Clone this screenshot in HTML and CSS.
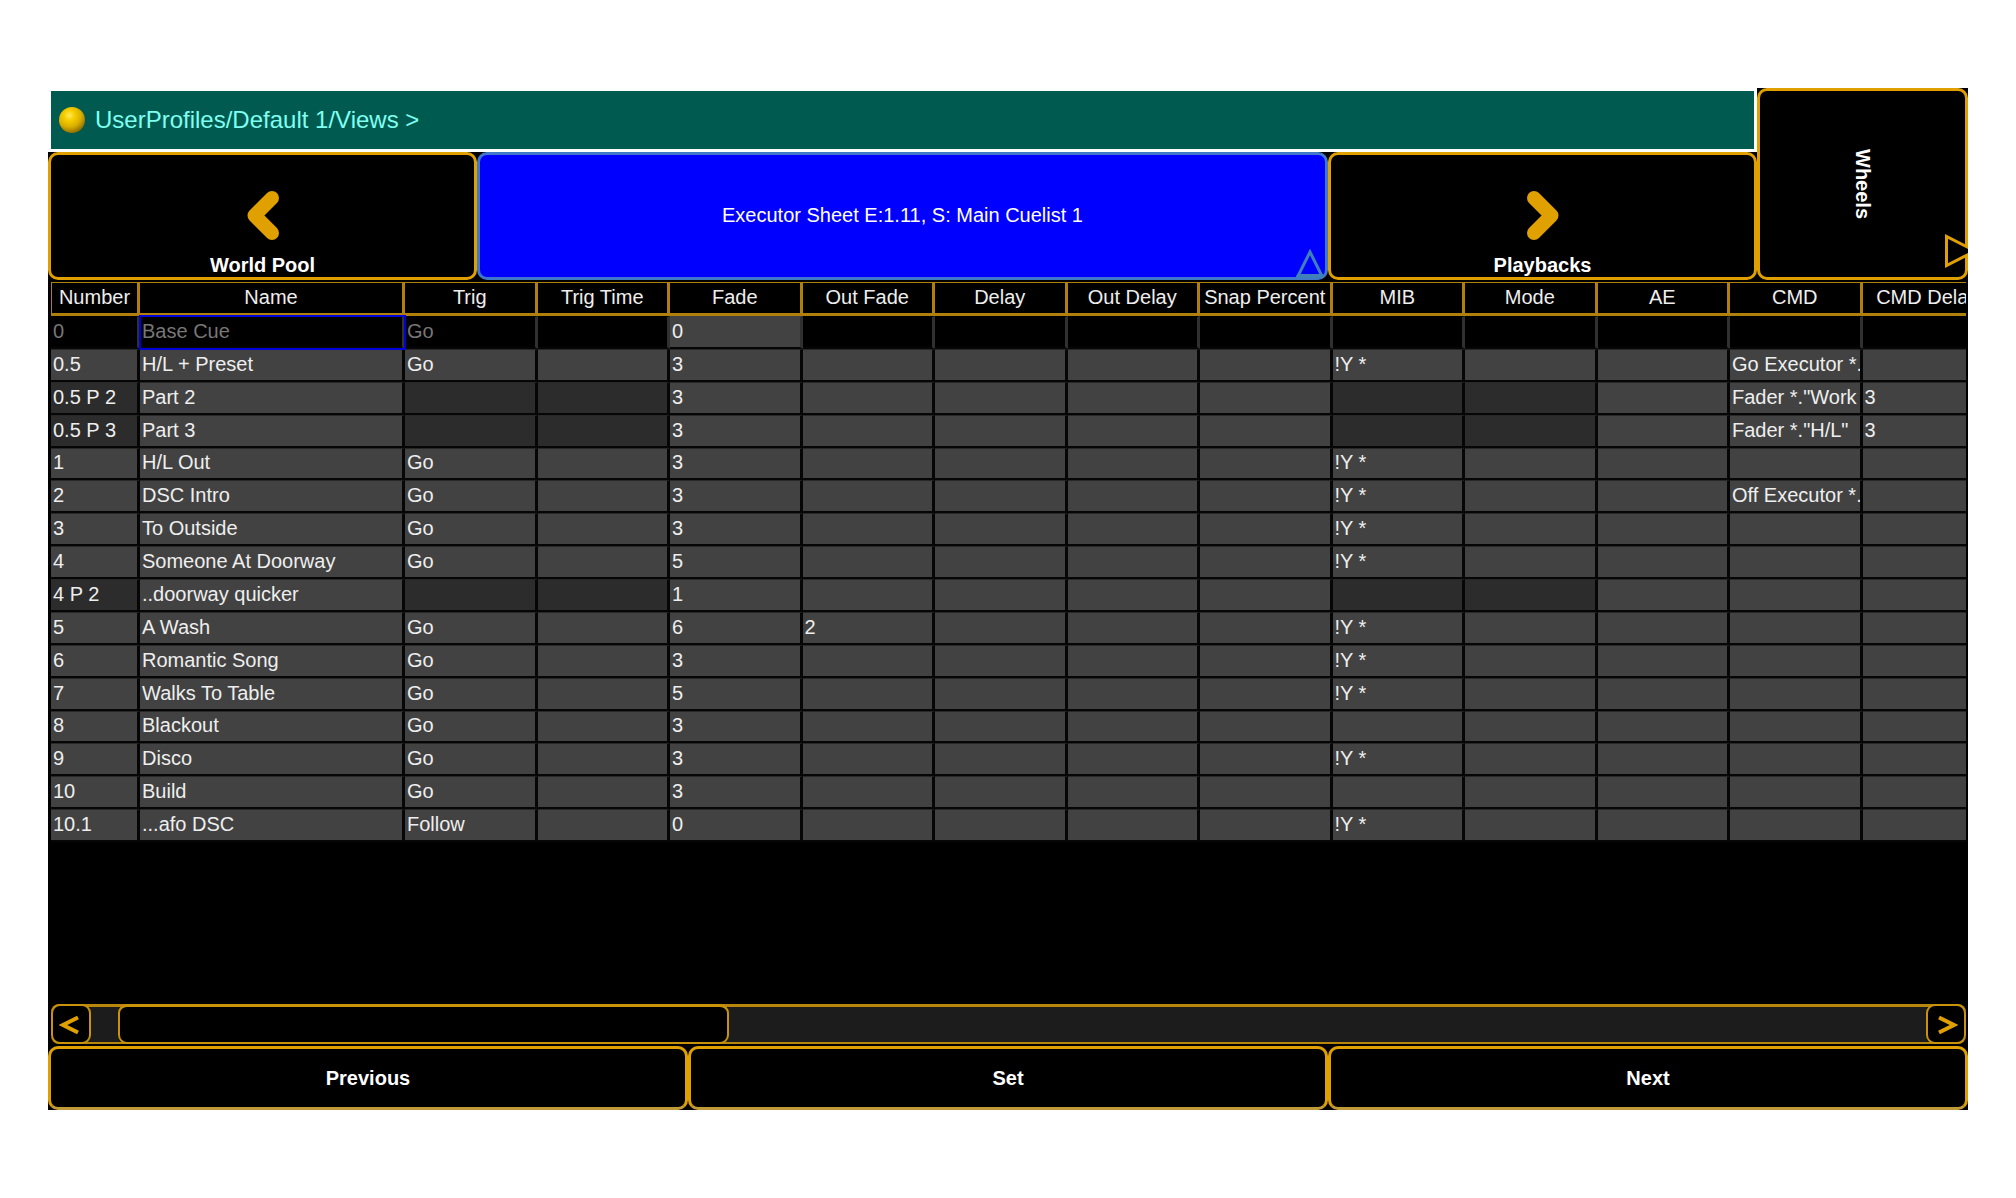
FILE: index.html
```
<!DOCTYPE html>
<html lang="en">
<head>
    <meta charset="UTF-8">
    <meta name="viewport" content="width=device-width, initial-scale=1.0">
    <title>Executor Sheet</title>
    <link rel="stylesheet" href="styles.css">
</head>
<body>
    <main class="console">
        <header class="top">
            <div class="top-left">
                <div class="title-bar">
                    <span class="ball"></span>
                    <span>UserProfiles/Default 1/Views &gt;</span>
                </div>
                <nav class="views">
                    <button type="button" class="btn view-btn">
                        <svg width="32" height="50" viewBox="0 0 32 50"><path d="M25 7L7.500 24.500L25 42" fill="none" stroke="#dfa000" stroke-width="14" stroke-linecap="round" stroke-linejoin="round"/></svg>
                        <span>World Pool</span>
                    </button>
                    <button type="button" class="btn current">
                        Executor Sheet E:1.11, S: Main Cuelist 1
                        <svg class="corner-up" width="28" height="30" viewBox="0 0 28 30"><path d="M14 3L26 27H2Z" fill="none" stroke="#3f80b8" stroke-width="3"/><path d="M1 25h26v4H0z" fill="#3f80b8"/></svg>
                    </button>
                    <button type="button" class="btn view-btn">
                        <svg width="32" height="50" viewBox="0 0 32 50"><path d="M7 7L24.500 24.500L7 42" fill="none" stroke="#dfa000" stroke-width="14" stroke-linecap="round" stroke-linejoin="round"/></svg>
                        <span>Playbacks</span>
                    </button>
                </nav>
            </div>
            <button type="button" class="btn wheels">
                <span>Wheels</span>
                <svg class="corner-right" width="23" height="34" viewBox="0 0 23 34"><path d="M1.500 2.500V31.500L30 17Z" fill="#000" stroke="#dfa000" stroke-width="3"/></svg>
            </button>
        </header>

        <section class="sheet">
            <div class="sheet-view">
                <table class="cues">
                    <colgroup><col class="col-number"><col class="col-name"><col span="12"></colgroup>
                    <thead>
                        <tr><th>Number</th><th>Name</th><th>Trig</th><th>Trig Time</th><th>Fade</th><th>Out Fade</th><th>Delay</th><th>Out Delay</th><th>Snap Percent</th><th>MIB</th><th>Mode</th><th>AE</th><th>CMD</th><th>CMD Delay</th></tr>
                    </thead>
                    <tbody>
                        <tr class="base"><td>0</td><td class="selected">Base Cue</td><td>Go</td><td></td><td class="set">0</td><td></td><td></td><td></td><td></td><td></td><td></td><td></td><td></td><td></td></tr>
                        <tr><td>0.5</td><td>H/L + Preset</td><td>Go</td><td></td><td>3</td><td></td><td></td><td></td><td></td><td>!Y *</td><td></td><td></td><td>Go Executor *.</td><td></td></tr>
                        <tr class="part"><td>0.5 P 2</td><td>Part 2</td><td></td><td></td><td>3</td><td></td><td></td><td></td><td></td><td></td><td></td><td></td><td>Fader *."Work</td><td>3</td></tr>
                        <tr class="part"><td>0.5 P 3</td><td>Part 3</td><td></td><td></td><td>3</td><td></td><td></td><td></td><td></td><td></td><td></td><td></td><td>Fader *."H/L"</td><td>3</td></tr>
                        <tr><td>1</td><td>H/L Out</td><td>Go</td><td></td><td>3</td><td></td><td></td><td></td><td></td><td>!Y *</td><td></td><td></td><td></td><td></td></tr>
                        <tr><td>2</td><td>DSC Intro</td><td>Go</td><td></td><td>3</td><td></td><td></td><td></td><td></td><td>!Y *</td><td></td><td></td><td>Off Executor *.</td><td></td></tr>
                        <tr><td>3</td><td>To Outside</td><td>Go</td><td></td><td>3</td><td></td><td></td><td></td><td></td><td>!Y *</td><td></td><td></td><td></td><td></td></tr>
                        <tr><td>4</td><td>Someone At Doorway</td><td>Go</td><td></td><td>5</td><td></td><td></td><td></td><td></td><td>!Y *</td><td></td><td></td><td></td><td></td></tr>
                        <tr class="part"><td>4 P 2</td><td>..doorway quicker</td><td></td><td></td><td>1</td><td></td><td></td><td></td><td></td><td></td><td></td><td></td><td></td><td></td></tr>
                        <tr><td>5</td><td>A Wash</td><td>Go</td><td></td><td>6</td><td>2</td><td></td><td></td><td></td><td>!Y *</td><td></td><td></td><td></td><td></td></tr>
                        <tr><td>6</td><td>Romantic Song</td><td>Go</td><td></td><td>3</td><td></td><td></td><td></td><td></td><td>!Y *</td><td></td><td></td><td></td><td></td></tr>
                        <tr><td>7</td><td>Walks To Table</td><td>Go</td><td></td><td>5</td><td></td><td></td><td></td><td></td><td>!Y *</td><td></td><td></td><td></td><td></td></tr>
                        <tr><td>8</td><td>Blackout</td><td>Go</td><td></td><td>3</td><td></td><td></td><td></td><td></td><td></td><td></td><td></td><td></td><td></td></tr>
                        <tr><td>9</td><td>Disco</td><td>Go</td><td></td><td>3</td><td></td><td></td><td></td><td></td><td>!Y *</td><td></td><td></td><td></td><td></td></tr>
                        <tr><td>10</td><td>Build</td><td>Go</td><td></td><td>3</td><td></td><td></td><td></td><td></td><td></td><td></td><td></td><td></td><td></td></tr>
                        <tr><td>10.1</td><td>...afo DSC</td><td>Follow</td><td></td><td>0</td><td></td><td></td><td></td><td></td><td>!Y *</td><td></td><td></td><td></td><td></td></tr>
                    </tbody>
                </table>
            </div>
            <div class="scroll">
                <button type="button" class="arrow arrow-left" aria-label="Scroll left">
                    <svg width="20" height="20" viewBox="0 0 20 20"><path d="M19 2.500L4 10L19 17.500" fill="none" stroke="#dfa000" stroke-width="4"/></svg>
                </button>
                <input type="range" class="scroll-range" aria-label="Scroll columns" min="0" max="1000" value="22">
                <button type="button" class="arrow arrow-right" aria-label="Scroll right">
                    <svg width="20" height="20" viewBox="0 0 20 20"><path d="M1 2.500L16 10L1 17.500" fill="none" stroke="#dfa000" stroke-width="4"/></svg>
                </button>
            </div>
        </section>

        <footer class="actions">
            <button type="button" class="btn">Previous</button>
            <button type="button" class="btn">Set</button>
            <button type="button" class="btn">Next</button>
        </footer>
    </main>
</body>
</html>
```
FILE: styles.css
```
* {
    box-sizing: border-box;
}
body {
    font-family: "Liberation Sans", Arial, sans-serif;
    font-size: 20px;
    line-height: 24px;
    margin: 0;
    padding: 88px 48px;
    min-height: 100vh;
    display: flex;
    background-color: #fff;
}
svg {
    display: block;
}
.console {
    flex: 1;
    min-width: 0;
    display: flex;
    flex-direction: column;
    background: #000;
    color: #fff;
}
.btn {
    position: relative;
    margin: 0;
    padding: 0;
    font: inherit;
    font-weight: bold;
    color: #fff;
    background: #000;
    border: 3px solid #dfa000;
    border-radius: 10px;
    cursor: pointer;
}

/* Title bar and view buttons */
.top {
    display: flex;
}
.top-left {
    flex: 1;
    min-width: 0;
}
.title-bar {
    display: flex;
    align-items: center;
    gap: 10px;
    height: 64px;
    padding: 0 8px;
    font-size: 24px;
    color: #7ffff0;
    background: #005a50;
    border: 3px solid #fff;
}
.ball {
    width: 26px;
    height: 26px;
    border-radius: 50%;
    background: radial-gradient(circle at 40% 32%, #ffe95a 0, #f7cf00 22%, #d9ae00 50%, #8a6a00 78%, #4d3c00 100%);
}
.views {
    display: grid;
    grid-template-columns: 429fr 851fr 429fr;
    height: 128px;
}
.view-btn {
    display: flex;
    flex-direction: column;
    align-items: center;
    justify-content: flex-end;
    gap: 12px;
}
.current {
    padding-bottom: 2px;
    font-weight: normal;
    background: #00f;
    border-color: #3f78c8;
}
.corner-up {
    position: absolute;
    right: 1px;
    bottom: -2px;
}
.wheels {
    width: 211px;
    display: flex;
    align-items: center;
    justify-content: center;
}
.wheels span {
    writing-mode: vertical-rl;
}
.corner-right {
    position: absolute;
    right: -3px;
    bottom: 9px;
}

/* Cue sheet */
.sheet {
    flex: 1;
    display: flex;
    flex-direction: column;
    padding: 2px 2px 2px 3px;
}
.sheet-view {
    flex: 1;
    overflow: hidden;
}
.cues {
    table-layout: fixed;
    width: 1944px;
    height: 560px;
    border-spacing: 0;
    color: #eee;
}
.col-number {
    width: 89px;
}
.col-name {
    width: 265px;
}
.cues th,
.cues td {
    padding: 0 0 2px;
    overflow: hidden;
    white-space: nowrap;
}
.cues th {
    height: 34px;
    font-weight: normal;
    border: solid #b0800a;
    border-width: 1px 3px 3px 0;
}
.cues th:first-child {
    border-left-width: 1px;
}
.cues td {
    padding-left: 2px;
    text-align: left;
    background: #424242;
    border: solid #060606;
    border-width: 1px 3px 2px 0;
    border-top-color: #282828;
}
.part td:nth-child(1),
.part td:nth-child(3),
.part td:nth-child(4),
.part td:nth-child(10),
.part td:nth-child(11) {
    background: #2c2c2c;
}
.cues .base td {
    color: #777;
    background: #000;
    border-top-color: #000;
    border-right-color: #303030;
}
.cues .base .set {
    color: #eee;
    background: #424242;
    border-top-color: #424242;
}
.cues .base .selected {
    outline: 2px solid #0000d8;
    outline-offset: -1px;
}

/* Horizontal scroll bar */
.scroll {
    display: flex;
    height: 40px;
    background: #1c1c1c;
    border: solid #b8860a;
    border-width: 3px 0 2px;
    border-radius: 8px;
}
.arrow {
    width: 40px;
    margin: -3px 0 -2px;
    padding: 2px 0 0;
    display: flex;
    align-items: center;
    justify-content: center;
    background: #000;
    border: 2px solid #c8930a;
    border-radius: 9px;
}
.arrow-left {
    padding-right: 4px;
}
.arrow-right {
    padding-left: 4px;
}
.scroll-range {
    flex: 1;
    min-width: 0;
    height: 40px;
    margin: -3px 0 -2px;
    background: none;
    appearance: none;
}
.scroll-range::-webkit-slider-thumb {
    appearance: none;
    width: 611px;
    height: 40px;
    background: #000;
    border: solid #c8930a;
    border-width: 3px 2px 2px;
    border-radius: 9px;
}

.actions {
    display: grid;
    grid-template-columns: repeat(3, 1fr);
    height: 64px;
}
.actions .btn {
    border-bottom-color: #c29a3a;
}
```
